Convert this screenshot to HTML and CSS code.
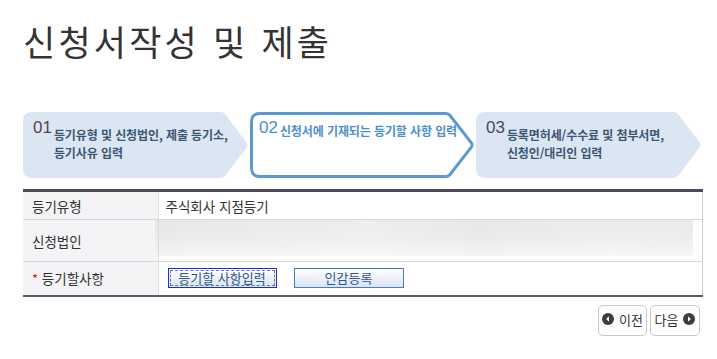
FILE: index.html
```html
<!DOCTYPE html>
<html lang="ko">
<head>
<meta charset="utf-8">
<link rel="stylesheet" href="styles.css">
</head>
<body>
<div class="page">
  <h1 class="title">신청서작성 및 제출</h1>

  <div class="steps">
    <div class="step step-1">
      <svg class="step-shape" width="225" height="66" viewBox="0 0 225 66"><path d="M9 0 H198 Q200 0 202 2 L224 31 Q225 33 224 35 L202 64 Q200 66 198 66 H9 Q0 66 0 57 V9 Q0 0 9 0 Z" fill="#dbe6f2"/></svg>
      <span class="step-num">01</span>
      <span class="step-text">등기유형 및 신청법인, 제출 등기소,<br>등기사유 입력</span>
    </div>
    <div class="step step-2 active">
      <svg class="step-shape" width="224" height="66" viewBox="0 0 224 66"><path d="M10 1.5 H196 Q198.5 1.5 200 3.5 L221.5 31 Q222.5 33 221.5 35 L200 62.5 Q198.5 64.5 196 64.5 H10 Q1.5 64.5 1.5 56 V10 Q1.5 1.5 10 1.5 Z" fill="#ffffff" stroke="#5a9bd3" stroke-width="3"/></svg>
      <span class="step-num">02</span>
      <span class="step-text">신청서에 기재되는 등기할 사항 입력</span>
    </div>
    <div class="step step-3">
      <svg class="step-shape" width="225" height="66" viewBox="0 0 225 66"><path d="M9 0 H198 Q200 0 202 2 L224 31 Q225 33 224 35 L202 64 Q200 66 198 66 H9 Q0 66 0 57 V9 Q0 0 9 0 Z" fill="#dbe6f2"/></svg>
      <span class="step-num">03</span>
      <span class="step-text">등록면허세/수수료 및 첨부서면,<br>신청인/대리인 입력</span>
    </div>
  </div>

  <table class="form">
    <tr class="row-1">
      <th>등기유형</th>
      <td>주식회사 지점등기</td>
    </tr>
    <tr class="row-2">
      <th>신청법인</th>
      <td><div class="blurred"></div></td>
    </tr>
    <tr class="row-3">
      <th><span class="req">*</span> 등기할사항</th>
      <td>
        <div class="btns">
          <button class="btn btn-focus"><span>등기할 사항입력</span></button>
          <button class="btn">인감등록</button>
        </div>
      </td>
    </tr>
  </table>

  <div class="nav">
    <button class="nav-btn"><span class="circ"><svg width="12" height="12" viewBox="0 0 12 12"><circle cx="6" cy="6" r="6" fill="#3c3c48"/><path d="M7 3.2 L4.2 6 L7 8.8 Z" fill="#fff"/></svg></span>이전</button>
    <button class="nav-btn">다음<span class="circ"><svg width="12" height="12" viewBox="0 0 12 12"><circle cx="6" cy="6" r="6" fill="#3c3c48"/><path d="M5 3.2 L7.8 6 L5 8.8 Z" fill="#fff"/></svg></span></button>
  </div>
</div>
</body>
</html>
```

FILE: styles.css
```css
* { box-sizing: border-box; }
html, body { margin: 0; padding: 0; background: #fff; }
body {
  font-family: "Noto Sans CJK KR", "Noto Sans", sans-serif;
  color: #333;
}
.page {
  width: 717px;
  padding: 0 0 0 23px;
}
.title {
  margin: 0;
  padding-top: 17px;
  height: 70px;
  font-size: 35px;
  line-height: 48px;
  font-weight: 400;
  letter-spacing: 3.2px;
  color: #333;
}
.steps {
  display: flex;
  gap: 1px;
  margin-top: 42px;
  height: 66px;
}
.step {
  position: relative;
  height: 66px;
  display: flex;
  align-items: flex-start;
  padding: 6px 0 0 10px;
}
.step-1, .step-3 { width: 225px; }
.step-2 { width: 224px; margin-left: 1px; padding-left: 9px; }
.step-3 { margin-left: 1px; padding-left: 10px; }
.step-shape {
  position: absolute;
  left: 0;
  top: 0;
}
.step-num {
  position: relative;
  font-family: "Liberation Sans", Arial, sans-serif;
  font-size: 17px;
  line-height: 20px;
  color: #4a4a55;
  margin-right: 2px;
}
.step-text {
  position: relative;
  font-size: 12px;
  font-weight: 700;
  line-height: 18px;
  color: #3b5673;
  padding-top: 8px;
  letter-spacing: -0.1px;
}
.step-2 .step-num { color: #4a90cf; }
.step-2 .step-text { color: #4a8fcf; padding-top: 4px; }

.form {
  margin-top: 11px;
  width: 680px;
  border-collapse: collapse;
  border-top: 3px solid #4e4a5e;
  border-bottom: 2px solid #5a5a64;
  font-size: 13.5px;
}
.form th, .form td {
  border-bottom: 1px solid #d8d8dc;
  padding: 0;
  vertical-align: middle;
  text-align: left;
  font-weight: 400;
}
.form tr:last-child th, .form tr:last-child td { border-bottom: 0; }
.form th {
  width: 135px;
  background: #f4f4f6;
  padding-left: 9px;
  border-right: 1px solid #dcdcdf;
  color: #333;
}
.form td {
  padding-left: 7px;
  border-right: 1px solid #d0d0d4;
  color: #333;
}
.row-1 th, .row-1 td { height: 29px; }
.row-2 th, .row-2 td { height: 42px; }
.row-3 th, .row-3 td { height: 34px; }
.row-2 td { padding: 0 9px 5px 0; }
.blurred {
  margin-left: -4px;
  height: 36px;
  background:
    linear-gradient(to right, rgba(255,255,255,0) 0%, rgba(255,255,255,0.25) 40%, rgba(255,255,255,0) 60%, rgba(255,255,255,0.2) 85%, rgba(255,255,255,0.1) 100%),
    linear-gradient(to bottom, #e7e7e7 0%, #ebebeb 50%, #f5f5f5 100%);
}
.req { color: #e0141e; font-size: 13px; }

.btns {
  display: flex;
  gap: 17px;
  padding-left: 2px;
}
.btn {
  width: 110px;
  height: 20px;
  padding: 0;
  border: 1px solid #4b7bb8;
  background: linear-gradient(to bottom, #ffffff 0%, #eef2f9 45%, #d9e3f2 100%);
  font-family: "Noto Sans CJK KR", sans-serif;
  font-size: 13px;
  line-height: 18px;
  color: #35548c;
}
.btn-focus {
  width: 109px;
  border: 1px solid #1530d8;
  padding: 1px;
}
.btn-focus span {
  display: block;
  height: 16px;
  line-height: 14px;
  border: 1px dashed #777;
}
.nav {
  display: flex;
  justify-content: flex-end;
  gap: 3px;
  width: 677px;
  margin-top: 8px;
}
.nav-btn {
  display: flex;
  align-items: center;
  justify-content: center;
  gap: 5px;
  width: 49px;
  height: 31px;
  padding: 0 0 2px 0;
  border: 1px solid #c8c8cc;
  border-radius: 5px;
  background: #fff;
  font-family: "Noto Sans CJK KR", sans-serif;
  font-size: 13px;
  color: #333;
}
.nav-btn + .nav-btn { width: 50px; }
.circ { display: flex; }
```
